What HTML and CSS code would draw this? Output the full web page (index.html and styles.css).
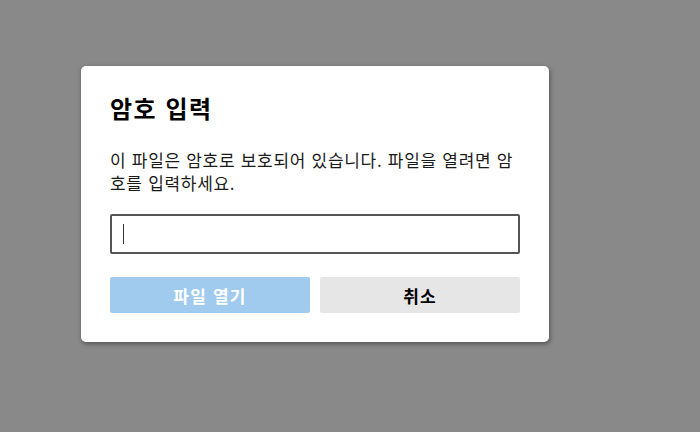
FILE: index.html
```html
<!DOCTYPE html>
<html lang="ko">
<head>
<meta charset="utf-8">
<link rel="stylesheet" href="styles.css">
</head>
<body>
<div class="overlay">
  <div class="dialog">
    <h1 class="title">암호 입력</h1>
    <p class="message">이 파일은 암호로 보호되어 있습니다. 파일을 열려면 암호를 입력하세요.</p>
    <div class="field"><span class="caret"></span></div>
    <div class="actions">
      <button class="btn btn-primary">파일 열기</button>
      <button class="btn btn-secondary">취소</button>
    </div>
  </div>
</div>
</body>
</html>
```
FILE: styles.css
```css
html, body {
  margin: 0;
  padding: 0;
  width: 700px;
  height: 432px;
  background: #898989;
  font-family: "Noto Sans CJK KR", "Noto Sans", sans-serif;
  overflow: hidden;
}
.overlay {
  padding: 66px 0 0 81px;
}
.dialog {
  width: 410px;
  padding: 29px;
  background: #fff;
  border-radius: 5px;
  box-shadow: 1px 2px 5px rgba(0,0,0,0.4);
}
.title {
  margin: 0;
  font-size: 24px;
  font-weight: 700;
  line-height: 26px;
  letter-spacing: 1.5px;
  color: #000;
}
.message {
  margin: 27px 0 0 0;
  font-size: 17px;
  line-height: 23px;
  letter-spacing: 0.7px;
  color: #1a1a1a;
  word-break: break-all;
}
.field {
  margin-top: 20px;
  height: 36px;
  border: 2px solid #555;
  border-radius: 2px;
  display: flex;
  align-items: center;
  padding-left: 11px;
}
.caret {
  width: 1px;
  height: 20px;
  background: #333;
}
.actions {
  margin-top: 23px;
  display: flex;
  gap: 10px;
}
.btn {
  flex: 1;
  height: 36px;
  border: none;
  border-radius: 2px;
  font-family: inherit;
  font-size: 17px;
  font-weight: 700;
  letter-spacing: 1.2px;
}
.btn-primary {
  background: #a0cbee;
  color: #fff;
}
.btn-secondary {
  background: #e6e6e6;
  color: #000;
}
```
